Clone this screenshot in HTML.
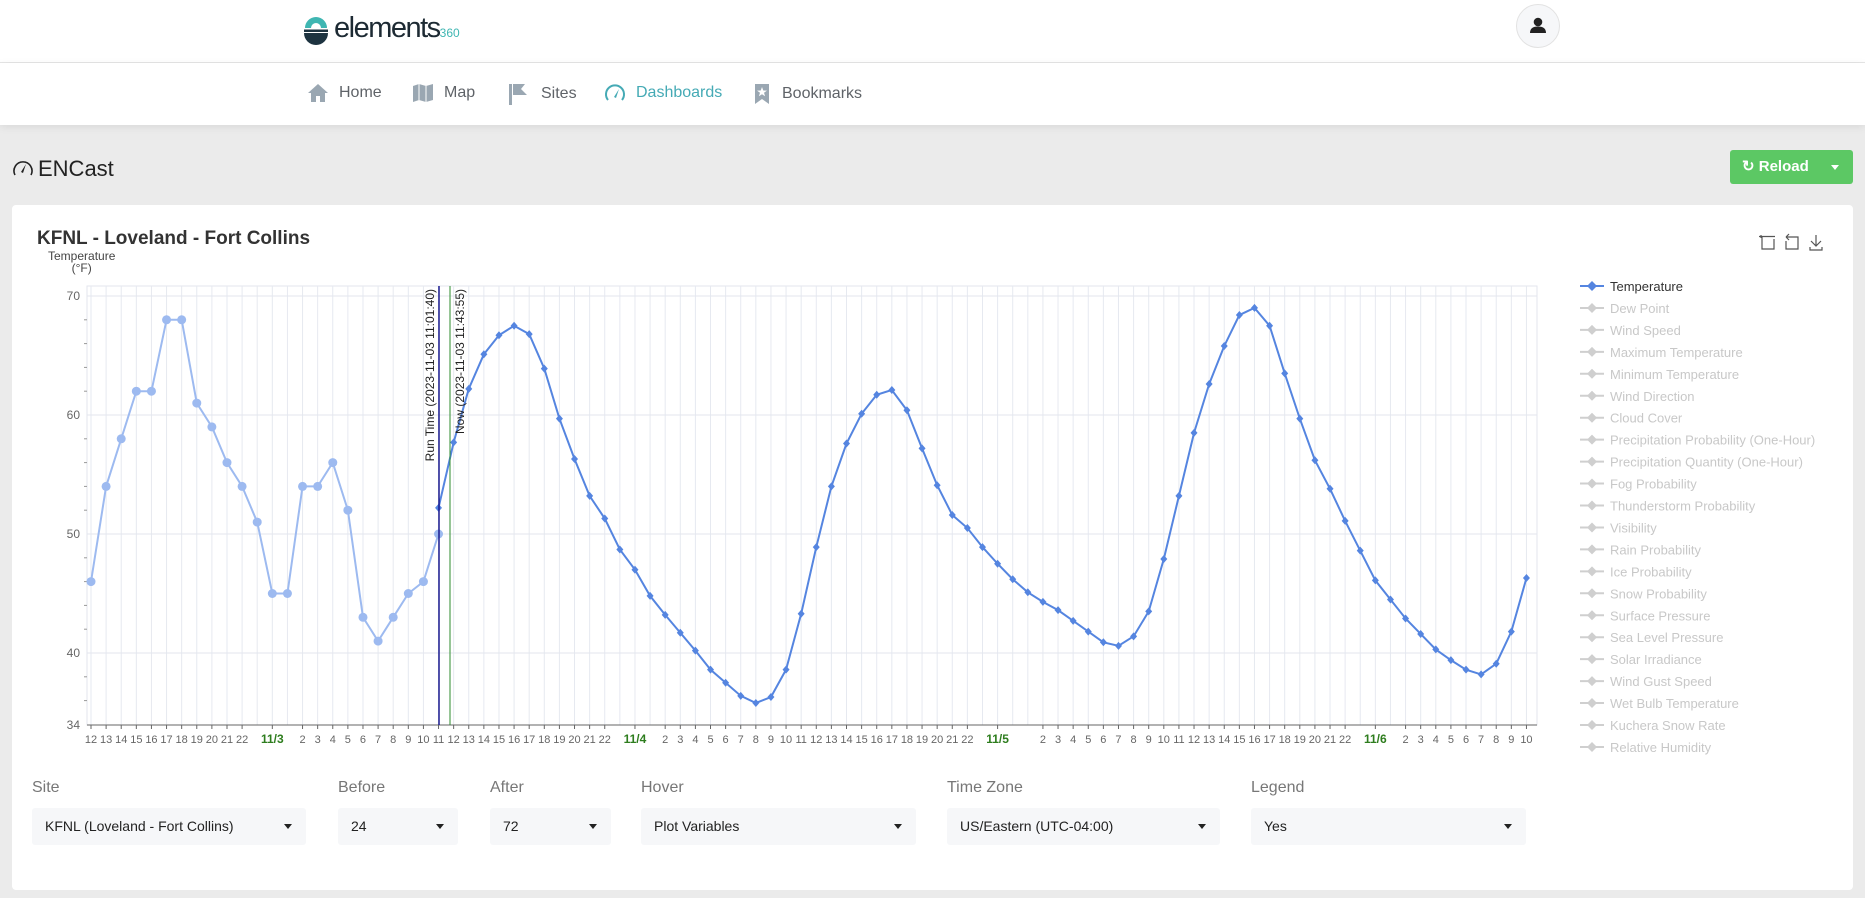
<!DOCTYPE html>
<html><head><meta charset="utf-8">
<style>
*{box-sizing:border-box;margin:0;padding:0}
body{width:1865px;height:898px;overflow:hidden;background:#ebebeb;font-family:"Liberation Sans",sans-serif;position:relative}
.top{position:absolute;left:0;top:0;width:1865px;height:63px;background:#fff;border-bottom:1px solid #e6e6e6}
.nav{position:absolute;left:0;top:63px;width:1865px;height:62px;background:#fff;box-shadow:0 2px 8px rgba(0,0,0,.08)}
.ni{position:absolute;top:20px;font-size:16px;color:#5f6368;display:flex;align-items:center;gap:10px}
.card{position:absolute;left:12px;top:205px;width:1841px;height:685px;background:#fff;border-radius:4px}
.lbl{position:absolute;top:779px;font-size:16px;color:#777}
.sel{position:absolute;top:808px;height:37px;background:#f6f7f9;border-radius:3px;font-size:14px;color:#222;padding:0 0 0 13px;line-height:37px}
.sel:after{content:"";position:absolute;right:14px;top:16px;border-left:4px solid transparent;border-right:4px solid transparent;border-top:5px solid #222}
</style></head><body>
<div class="top">
  <svg style="position:absolute;left:303px;top:17px" width="26" height="28" viewBox="0 0 26 28">
    <path d="M2 11 A11 11 0 0 1 24 11 L18 11 A5 5 0 0 0 8 11Z" fill="#3fb6b2"/>
    <rect x="1" y="12.5" width="24" height="2.5" fill="#1d3340"/>
    <path d="M1 16 L25 16 A12 12 0 0 1 1 16Z" fill="#1d3340"/>
  </svg>
  <div style="position:absolute;left:334px;top:12px;font-size:29px;color:#1d2a33;letter-spacing:-1.5px">elements<span style="font-size:12px;color:#3fb6b2;letter-spacing:0">360</span></div>
  <div style="position:absolute;left:1516px;top:4px;width:44px;height:44px;border-radius:50%;background:#f6f7f9;border:1px solid #e2e2e2"></div>
  <svg style="position:absolute;left:1529px;top:16px" width="18" height="18" viewBox="0 0 18 18"><circle cx="9" cy="6" r="4.3" fill="#222"/><path d="M1 17 Q1 10.5 9 10.5 Q17 10.5 17 17Z" fill="#222"/></svg>
</div>
<div class="nav">
  <div class="ni" style="left:307px"><svg width="22" height="20" viewBox="0 0 22 20"><path d="M11 1 L21 10 H18 V19 H13 V13 H9 V19 H4 V10 H1Z" fill="#9aa7b2"/></svg>Home</div>
  <div class="ni" style="left:412px"><svg width="22" height="20" viewBox="0 0 22 20"><path d="M1 3 L7 1 L14 3 L21 1 V17 L14 19 L7 17 L1 19Z" fill="#9aa7b2"/><path d="M7 1 V17 M14 3 V19" stroke="#fff" stroke-width="1"/></svg>Map</div>
  <div class="ni" style="left:507px"><svg width="24" height="22" viewBox="0 0 24 22"><rect x="2" y="1" width="3" height="21" fill="#9aa7b2"/><path d="M6 1 H18 L14 6 L20 12 H6Z" fill="#9aa7b2"/></svg>Sites</div>
  <div class="ni" style="left:604px;color:#45aab5"><svg width="22" height="20" viewBox="0 0 22 20"><path d="M4 17 A9 9 0 1 1 18 17" fill="none" stroke="#45aab5" stroke-width="2"/><path d="M10 14 L15 6 L12 15Z" fill="#45aab5"/></svg>Dashboards</div>
  <div class="ni" style="left:752px"><svg width="20" height="22" viewBox="0 0 20 22"><path d="M3 1 H17 V21 L10 16 L3 21Z" fill="#9aa7b2"/><path d="M10 4 L11.3 7.5 L15 7.6 L12 9.8 L13.1 13.3 L10 11.2 L6.9 13.3 L8 9.8 L5 7.6 L8.7 7.5Z" fill="#fff"/></svg>Bookmarks</div>
</div>
<svg style="position:absolute;left:12px;top:158px" width="22" height="20" viewBox="0 0 22 20"><path d="M3 17 A9 9 0 1 1 19 17" fill="none" stroke="#222" stroke-width="1.6"/><path d="M9 14 L14 6 L11 15Z" fill="#222"/></svg>
<div style="position:absolute;left:38px;top:156px;font-size:22px;color:#222">ENCast</div>
<div style="position:absolute;left:1730px;top:150px;width:123px;height:34px;background:#5cc864;border-radius:3px;color:#fff;font-size:15px;font-weight:bold;line-height:34px;padding-left:12px">&#x21BB; Reload<span style="position:absolute;right:14px;top:15px;border-left:4px solid transparent;border-right:4px solid transparent;border-top:5px solid #fff"></span></div>
<div class="card"></div>
<div style="position:absolute;left:37px;top:228px;font-size:19px;font-weight:bold;color:#333">KFNL - Loveland - Fort Collins</div>
<div style="position:absolute;left:48px;top:250px;font-size:12px;color:#444;text-align:center;line-height:12px">Temperature<br>(°F)</div>
<svg style="position:absolute;left:1758px;top:232px" width="80" height="20" viewBox="0 0 80 20" fill="none" stroke="#555" stroke-width="1.2">
<path d="M3 3 V6 M1 4.5 H17 M4 4.5 V17 H16 V7"/><path d="M28 5 H40 V17 H28 V9 M28 5 L31 2 M28 5 L31 8"/><path d="M58 3 V14 M53 9 L58 14 L63 9 M52 15 V18 H64 V15"/>
</svg>
<svg id="ch" style="position:absolute;left:0;top:0" width="1865" height="898"></svg>
<div class="lbl" style="left:32px">Site</div>
<div class="lbl" style="left:338px">Before</div>
<div class="lbl" style="left:490px">After</div>
<div class="lbl" style="left:641px">Hover</div>
<div class="lbl" style="left:947px">Time Zone</div>
<div class="lbl" style="left:1251px">Legend</div>
<div class="sel" style="left:32px;width:274px">KFNL (Loveland - Fort Collins)</div>
<div class="sel" style="left:338px;width:120px">24</div>
<div class="sel" style="left:490px;width:121px">72</div>
<div class="sel" style="left:641px;width:275px">Plot Variables</div>
<div class="sel" style="left:947px;width:273px">US/Eastern (UTC-04:00)</div>
<div class="sel" style="left:1251px;width:275px">Yes</div>
<script>
var ns="http://www.w3.org/2000/svg",s=document.getElementById('ch'),h='';
function X(i){return 91+i*15.11}function Y(t){return 296+(70-t)*11.9}
var light=[46,54,58,62,62,68,68,61,59,56,54,51,45,45,54,54,56,52,43,41,43,45,46,50];
var dark=[52.2,57.7,62.2,65.1,66.7,67.5,66.8,63.9,59.7,56.3,53.2,51.3,48.7,47,44.8,43.2,41.7,40.2,38.6,37.5,36.4,35.8,36.3,38.6,43.3,48.9,54,57.6,60.1,61.7,62.1,60.4,57.2,54.1,51.6,50.5,48.9,47.5,46.2,45.1,44.3,43.6,42.7,41.8,40.9,40.6,41.4,43.5,47.9,53.2,58.5,62.6,65.8,68.4,69,67.5,63.5,59.7,56.2,53.8,51.1,48.6,46.1,44.5,42.9,41.6,40.3,39.4,38.6,38.2,39.1,41.8,46.3];
h+='<rect x="87" y="286" width="1450" height="439" fill="#fff" stroke="#e3e6ee"/>';
for(var i=0;i<=95;i++){h+='<line x1="'+X(i)+'" y1="286" x2="'+X(i)+'" y2="725" stroke="#e6e9f0"/>';}
[70,60,50,40].forEach(function(t){h+='<line x1="87" y1="'+Y(t)+'" x2="1537" y2="'+Y(t)+'" stroke="#e3e6ee"/><text x="80" y="'+(Y(t)+4)+'" font-size="12" fill="#666" text-anchor="end">'+t+'</text>';});
h+='<text x="80" y="729" font-size="12" fill="#666" text-anchor="end">34</text>';
for(var t=36;t<70;t+=2){if(t%10)h+='<line x1="84" y1="'+Y(t)+'" x2="87" y2="'+Y(t)+'" stroke="#999"/>';}
h+='<line x1="87" y1="725" x2="1537" y2="725" stroke="#666"/>';
var dates={0:0,24:'11/3',48:'11/4',60:'11/5',85:'11/6'};
for(var i=0;i<=95;i++){var hr=i<=62?(12+i)%24:(11+i)%24;var lab=hr;
 if(i==12)lab='11/3';else if(i==36)lab='11/4';else if(i==60)lab='11/5';else if(i==85)lab='11/6';
 if(i==11||i==13||i==35||i==37||i==59||i==61||i==62||i==84||i==86)continue;
 h+='<line x1="'+X(i)+'" y1="725" x2="'+X(i)+'" y2="729" stroke="#666"/>';
 if(typeof lab=='string')h+='<text x="'+X(i)+'" y="743" font-size="12" font-weight="bold" fill="#2e7d1e" text-anchor="middle">'+lab+'</text>';
 else h+='<text x="'+X(i)+'" y="743" font-size="11" fill="#666" text-anchor="middle">'+lab+'</text>';}
var p=light.map(function(v,i){return X(i)+','+Y(v)}).join(' ');
h+='<polyline points="'+p+'" fill="none" stroke="#9dbaf0" stroke-width="2"/>';
light.forEach(function(v,i){h+='<circle cx="'+X(i)+'" cy="'+Y(v)+'" r="4.5" fill="#9dbaf0"/>';});
p=dark.map(function(v,i){return X(i+23)+','+Y(v)}).join(' ');
h+='<polyline points="'+p+'" fill="none" stroke="#5585e0" stroke-width="2"/>';
dark.forEach(function(v,i){var x=X(i+23),y=Y(v);h+='<path d="M'+x+' '+(y-4)+'L'+(x+3.5)+' '+y+'L'+x+' '+(y+4)+'L'+(x-3.5)+' '+y+'Z" fill="#5585e0"/>';});
h+='<line x1="439" y1="286" x2="439" y2="725" stroke="#1a1a8f" stroke-width="1.5"/><line x1="450" y1="286" x2="450" y2="725" stroke="#2e8b2e" stroke-width="1"/>';
h+='<text transform="translate(434,289) rotate(-90)" font-size="12" fill="#222" text-anchor="end">Run Time (2023-11-03 11:01:40)</text>';
h+='<text transform="translate(464,289) rotate(-90)" font-size="12" fill="#222" text-anchor="end">Now (2023-11-03 11:43:55)</text>';
var L=['Temperature','Dew Point','Wind Speed','Maximum Temperature','Minimum Temperature','Wind Direction','Cloud Cover','Precipitation Probability (One-Hour)','Precipitation Quantity (One-Hour)','Fog Probability','Thunderstorm Probability','Visibility','Rain Probability','Ice Probability','Snow Probability','Surface Pressure','Sea Level Pressure','Solar Irradiance','Wind Gust Speed','Wet Bulb Temperature','Kuchera Snow Rate','Relative Humidity'];
L.forEach(function(n,i){var y=286+i*21.95,c=i?'#cfcfcf':'#5585e0';
h+='<line x1="1580" y1="'+y+'" x2="1604" y2="'+y+'" stroke="'+c+'" stroke-width="2"/><path d="M1592 '+(y-5)+'L1597 '+y+'L1592 '+(y+5)+'L1587 '+y+'Z" fill="'+c+'"/><text x="1610" y="'+(y+5)+'" font-size="13" fill="'+(i?'#c8c8c8':'#333')+'">'+n+'</text>';});
s.innerHTML=h;
</script>
</body></html>
